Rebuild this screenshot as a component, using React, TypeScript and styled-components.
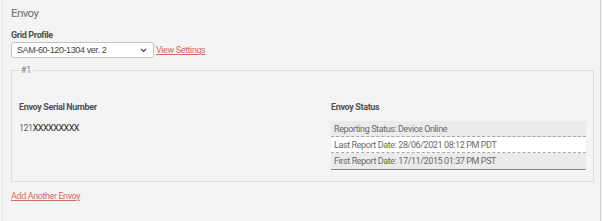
import React from 'react'
import styled, { createGlobalStyle } from 'styled-components'

const GlobalStyle = createGlobalStyle`
  html, body {
    margin: 0;
    padding: 0;
    background: #f4f4f4;
    font-family: Roboto, 'Liberation Sans', Arial, sans-serif;
  }
`

const colors = {
  BG: '#f4f4f4',
  LABEL: '#4f5257',
  TEXT: '#6a6a6a',
  LINK: '#d46a5a',
  BORDER: '#dedede',
}

const Page = styled.div`
  box-sizing: border-box;
  height: 221px;
  margin: 0 1px 0 2px;
  padding: 5px 0 0 8px;
  border-left: 1px solid #e4e4e4;
  border-right: 1px solid #d0d0d0;
  background: ${colors.BG};
`

const Title = styled.div`
  color: #6e6e6e;
  font-size: 11.5px;
  letter-spacing: -0.6px;
  line-height: 16px;
  margin-bottom: 9px;
`

const FieldLabel = styled.div`
  color: ${colors.LABEL};
  font-size: 9px;
  font-weight: 700;
  letter-spacing: -0.35px;
  line-height: 11px;
`

const SelectRow = styled.div`
  display: flex;
  align-items: center;
  gap: 2px;
  margin-top: 1px;
`

const SelectBox = styled.div`
  box-sizing: border-box;
  width: 143px;
  height: 16px;
  display: flex;
  align-items: center;
  justify-content: space-between;
  padding: 0 6px 0 5px;
  background: #fff;
  border: 1px solid #c4c4c4;
  border-radius: 3px;
  font-family: 'Liberation Sans', Arial, sans-serif;
  font-size: 9px;
  letter-spacing: -0.4px;
  color: #444;
`

const Link = styled.a`
  color: ${colors.LINK};
  font-size: 9px;
  letter-spacing: -0.4px;
  text-decoration: underline;
  cursor: pointer;
`

const Fieldset = styled.fieldset`
  box-sizing: border-box;
  width: 583px;
  height: 117px;
  margin: 7px 0 0 0;
  padding: 27px 7px 0 7px;
  border: 1px solid ${colors.BORDER};
  display: grid;
  grid-template-columns: 312px 255px;
  align-items: start;
`

const Legend = styled.legend`
  color: #7a7a7a;
  font-size: 8.5px;
  padding: 0 2px;
  margin-left: 0;
`

const Column = styled.div`
  display: flex;
  flex-direction: column;
`

const ColumnLabel = styled(FieldLabel)`
  margin-bottom: 8px;
`

const Serial = styled.div`
  color: #666;
  font-size: 9px;
  letter-spacing: -0.5px;
  line-height: 12px;
  margin-top: 1px;
`

const Strong = styled.span`
  color: #222;
`

const StatusList = styled.div`
  display: flex;
  flex-direction: column;
  border-bottom: 1px solid #8a8a8a;
`

const StatusRow = styled.div<{ $light?: boolean; $last?: boolean }>`
  box-sizing: border-box;
  height: 16px;
  padding: 0 3px;
  display: flex;
  align-items: center;
  background: ${(props) => (props.$light ? '#ffffff' : '#ebebeb')};
  border-bottom: ${(props) => (props.$last ? 'none' : '1px dashed #a8a8a8')};
  color: ${colors.TEXT};
  font-size: 9px;
  letter-spacing: -0.4px;
`

const Footer = styled.div`
  margin-top: 6px;
  line-height: 12px;
`

const Chevron = () => (
  <svg width="7" height="5" viewBox="0 0 7 5">
    <path d="M1 1 L3.5 3.5 L6 1" fill="none" stroke="#444" strokeWidth="1.2" />
  </svg>
)

export default function App() {
  return (
    <>
      <GlobalStyle />
      <Page>
        <Title>Envoy</Title>
        <FieldLabel>Grid Profile</FieldLabel>
        <SelectRow>
          <SelectBox>
            <span>SAM-60-120-1304 ver. 2</span>
            <Chevron />
          </SelectBox>
          <Link>View Settings</Link>
        </SelectRow>
        <Fieldset>
          <Legend>#1</Legend>
          <Column>
            <ColumnLabel>Envoy Serial Number</ColumnLabel>
            <Serial>
              121<Strong>XXXXXXXXX</Strong>
            </Serial>
          </Column>
          <Column>
            <ColumnLabel>Envoy Status</ColumnLabel>
            <StatusList>
              <StatusRow>Reporting Status: Device Online</StatusRow>
              <StatusRow $light>Last Report Date: 28/06/2021 08:12 PM PDT</StatusRow>
              <StatusRow $last>First Report Date: 17/11/2015 01:37 PM PST</StatusRow>
            </StatusList>
          </Column>
        </Fieldset>
        <Footer>
          <Link>Add Another Envoy</Link>
        </Footer>
      </Page>
    </>
  )
}
